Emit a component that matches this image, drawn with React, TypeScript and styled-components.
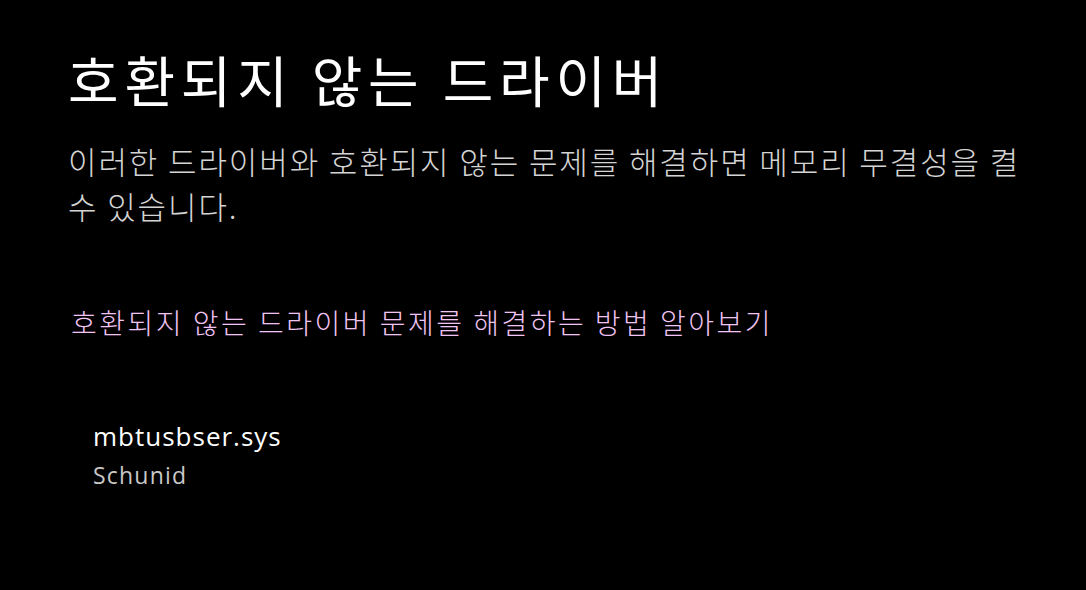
import React from "react"
import styled, { createGlobalStyle } from "styled-components"

const GlobalStyle = createGlobalStyle`
  html, body {
    margin: 0;
    padding: 0;
    background: #000;
  }
  body {
    font-family: "Noto Sans CJK KR", "Open Sans", sans-serif;
    color: #fff;
  }
`

const Page = styled.div`
  width: 1086px;
  height: 590px;
  box-sizing: border-box;
  background: #000;
  padding: 40px 50px 0 68px;
  overflow: hidden;
  display: flex;
  flex-direction: column;
  align-items: flex-start;
`

const Title = styled.h1`
  margin: 0;
  font-size: 55px;
  font-weight: 400;
  letter-spacing: 5.8px;
  line-height: 76px;
  color: #fff;
`

const Description = styled.p`
  margin: 22px 0 0;
  font-size: 31px;
  font-weight: 300;
  letter-spacing: 1.9px;
  line-height: 45px;
  color: #d4d4d4;
`

const HelpLink = styled.a`
  margin: 74px 0 0 3px;
  font-size: 28px;
  font-weight: 300;
  letter-spacing: 2.5px;
  line-height: 40px;
  color: #f2c4f4;
  text-decoration: none;
  cursor: pointer;
`

const DriverList = styled.ul`
  list-style: none;
  margin: 76px 0 0;
  padding: 0 0 0 25px;
`

const DriverItem = styled.li`
  display: flex;
  flex-direction: column;
`

const DriverName = styled.span`
  font-family: "Open Sans", "Noto Sans", sans-serif;
  font-size: 26px;
  letter-spacing: 1px;
  line-height: 36px;
  color: #fff;
`

const DriverVendor = styled.span`
  font-family: "Open Sans", "Noto Sans", sans-serif;
  margin-top: 6px;
  font-size: 23px;
  letter-spacing: 1.2px;
  line-height: 30px;
  color: #c8c8c8;
`

const drivers = [{ name: "mbtusbser.sys", vendor: "Schunid" }]

export default function App() {
  return (
    <Page>
      <GlobalStyle />
      <Title>호환되지 않는 드라이버</Title>
      <Description>
        이러한 드라이버와 호환되지 않는 문제를 해결하면 메모리 무결성을 켤 수 있습니다.
      </Description>
      <HelpLink>호환되지 않는 드라이버 문제를 해결하는 방법 알아보기</HelpLink>
      <DriverList>
        {drivers.map((d) => (
          <DriverItem key={d.name}>
            <DriverName>{d.name}</DriverName>
            <DriverVendor>{d.vendor}</DriverVendor>
          </DriverItem>
        ))}
      </DriverList>
    </Page>
  )
}
